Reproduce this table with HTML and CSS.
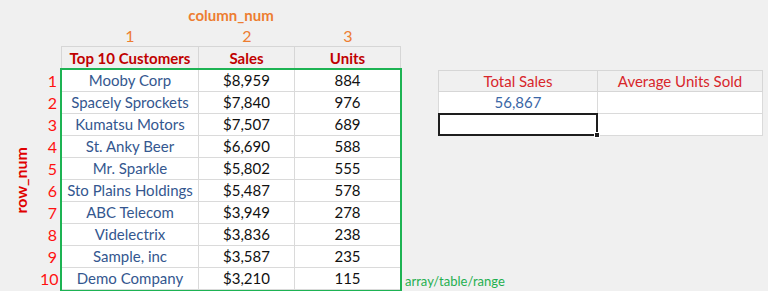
FILE: index.html
```html
<!DOCTYPE html>
<html lang="en">
<head>
    <meta charset="UTF-8">
    <title>INDEX / MATCH sheet</title>
    <link rel="stylesheet" href="styles.css">
</head>
<body>

    <div class="sheet">
        <!-- Vertical label for the row numbers -->
        <div class="row-label"><span>row_num</span></div>

        <div class="table-area">
            <div class="col-label">column_num</div>
            <div class="col-nums">
                <div class="w1">1</div>
                <div class="w2">2</div>
                <div class="w3">3</div>
            </div>

            <div class="head-row">
                <div class="w1">Top 10 Customers</div>
                <div class="w2">Sales</div>
                <div class="w3">Units</div>
            </div>

            <div class="body">
                <div class="row-nums">
                    <div>1</div><div>2</div><div>3</div><div>4</div><div>5</div>
                    <div>6</div><div>7</div><div>8</div><div>9</div><div>10</div>
                </div>

                <!-- Green outline = the data range -->
                <div class="data">
                    <div class="row"><div class="name">Mooby Corp</div><div class="sales">$8,959</div><div class="units">884</div></div>
                    <div class="row"><div class="name">Spacely Sprockets</div><div class="sales">$7,840</div><div class="units">976</div></div>
                    <div class="row"><div class="name">Kumatsu Motors</div><div class="sales">$7,507</div><div class="units">689</div></div>
                    <div class="row"><div class="name">St. Anky Beer</div><div class="sales">$6,690</div><div class="units">588</div></div>
                    <div class="row"><div class="name">Mr. Sparkle</div><div class="sales">$5,802</div><div class="units">555</div></div>
                    <div class="row"><div class="name">Sto Plains Holdings</div><div class="sales">$5,487</div><div class="units">578</div></div>
                    <div class="row"><div class="name">ABC Telecom</div><div class="sales">$3,949</div><div class="units">278</div></div>
                    <div class="row"><div class="name">Videlectrix</div><div class="sales">$3,836</div><div class="units">238</div></div>
                    <div class="row"><div class="name">Sample, inc</div><div class="sales">$3,587</div><div class="units">235</div></div>
                    <div class="row"><div class="name">Demo Company</div><div class="sales">$3,210</div><div class="units">115</div></div>
                </div>

                <div class="range-note">array/table/range</div>
            </div>
        </div>

        <!-- Lookup results -->
        <div class="results">
            <div class="res-head">
                <div class="rw1">Total Sales</div>
                <div class="rw2">Average Units Sold</div>
            </div>
            <div class="res-row">
                <div class="rw1 total">56,867</div>
                <div class="rw2"></div>
            </div>
            <div class="res-row">
                <div class="rw1 selected"><span class="handle"></span></div>
                <div class="rw2"></div>
            </div>
        </div>
    </div>

</body>
</html>
```

FILE: styles.css
```css
* {
    margin: 0;
    padding: 0;
    box-sizing: border-box;
}

body {
    font-family: Lato, "Open Sans", sans-serif;
    background-color: #f0f0f0;
    font-size: 15px;
    height: 291px;
    overflow: hidden;
}

.sheet {
    display: flex;
    align-items: flex-start;
}

/* Column widths */
.w1 { width: 138px; }
.w2 { width: 96px; }
.w3 { width: 106px; }

/* Row number label */
.row-label {
    width: 40px;
    height: 222px;
    margin-top: 69px;
    display: flex;
    justify-content: center;
    align-items: center;
}

.row-label span {
    writing-mode: vertical-rl;
    transform: rotate(180deg);
    color: #e00000;
    font-weight: bold;
    font-size: 16px;
}

.table-area {
    display: flex;
    flex-direction: column;
}

.col-label {
    margin-left: 21px;
    width: 340px;
    height: 26px;
    padding-top: 5px;
    text-align: center;
    color: #ed7d31;
    font-weight: bold;
    line-height: 20px;
}

.col-nums {
    display: flex;
    margin-left: 21px;
    height: 20px;
    color: #ed7d31;
    font-size: 16px;
    line-height: 20px;
    text-align: center;
}

.head-row {
    display: flex;
    margin-left: 21px;
    height: 23px;
}

.head-row div {
    text-align: center;
    color: #c00000;
    font-weight: bold;
    line-height: 22px;
    border-top: 1px solid #d6d6d6;
    border-right: 1px solid #d6d6d6;
}

.head-row div:first-child {
    border-left: 1px solid #d6d6d6;
}

.body {
    display: flex;
    margin-top: -1px;
}

.row-nums {
    width: 20px;
    padding-top: 2px;
    color: #ff1010;
    font-size: 16px;
    text-align: right;
    padding-right: 3px;
}

.row-nums div {
    height: 22px;
    line-height: 22px;
}

/* Data range */
.data {
    width: 342px;
    border: 2px solid #1db353;
    background-color: #fff;
}

.row {
    display: flex;
    height: 22px;
    border-bottom: 1px solid #dadada;
}

.row div {
    text-align: center;
    line-height: 21px;
    color: #111;
    border-right: 1px solid #dadada;
}

.row .name {
    width: 137px;
    color: #34578f;
}

.row .sales {
    width: 96px;
}

.row .units {
    width: 105px;
    border-right: none;
}

.range-note {
    align-self: flex-end;
    width: 0;
    margin-bottom: 3px;
    text-indent: 3px;
    color: #1faf4f;
    font-size: 13px;
    white-space: nowrap;
}

/* Results table */
.results {
    margin-left: 36px;
    margin-top: 70px;
}

.rw1 { width: 159px; }
.rw2 { width: 165px; }

.res-head {
    display: flex;
    height: 22px;
    border-top: 1px solid #d6d6d6;
    border-left: 1px solid #d6d6d6;
    border-bottom: 1px solid #d6d6d6;
}

.res-head div {
    text-align: center;
    color: #d8262b;
    line-height: 20px;
    border-right: 1px solid #d6d6d6;
}

.res-row {
    display: flex;
    height: 22px;
    background-color: #fff;
    border-left: 1px solid #dadada;
    border-bottom: 1px solid #dadada;
}

.res-row div {
    text-align: center;
    line-height: 21px;
    border-right: 1px solid #dadada;
    position: relative;
}

.res-row .total {
    color: #3a66a6;
}

.res-row .selected {
    margin: -1px 0 -1px -1px;
    width: 160px;
    height: 23px;
    border: 2px solid #1e1e1e;
}

.handle {
    position: absolute;
    right: -4px;
    bottom: -4px;
    width: 6px;
    height: 6px;
    background-color: #1e1e1e;
    border: 1px solid #fff;
}
```
